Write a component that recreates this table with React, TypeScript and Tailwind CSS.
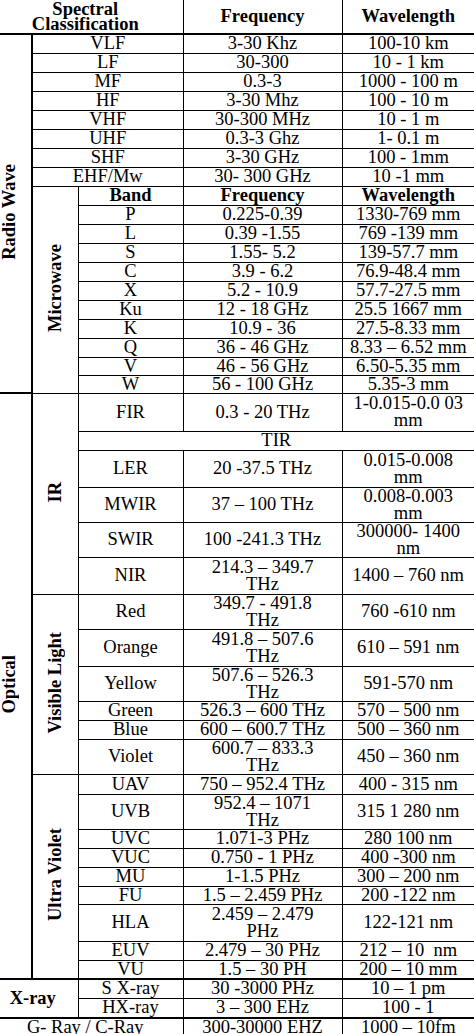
const radio = [
  ['VLF', '3-30 Khz', '100-10 km'],
  ['LF', '30-300', '10 - 1 km'],
  ['MF', '0.3-3', '1000 - 100 m'],
  ['HF', '3-30 Mhz', '100 - 10 m'],
  ['VHF', '30-300 MHz', '10 - 1 m'],
  ['UHF', '0.3-3 Ghz', '1- 0.1 m'],
  ['SHF', '3-30 GHz', '100 - 1mm'],
  ['EHF/Mw', '30- 300 GHz', '10 -1 mm'],
]

const micro = [
  { band: 'P', freq: '0.225-0.39', wave: '1330-769 mm', h: 'h-[19px]' },
  { band: 'L', freq: '0.39 -1.55', wave: '769 -139 mm', h: 'h-[19px]' },
  { band: 'S', freq: '1.55- 5.2', wave: '139-57.7 mm', h: 'h-[19px]' },
  { band: 'C', freq: '3.9 - 6.2', wave: '76.9-48.4 mm', h: 'h-[19px]' },
  { band: 'X', freq: '5.2 - 10.9', wave: '57.7-27.5 mm', h: 'h-[19px]' },
  { band: 'Ku', freq: '12 - 18 GHz', wave: '25.5 1667 mm', h: 'h-[19px]' },
  { band: 'K', freq: '10.9 - 36', wave: '27.5-8.33 mm', h: 'h-[19px]' },
  { band: 'Q', freq: '36 - 46 GHz', wave: '8.33 – 6.52 mm', h: 'h-[19px]' },
  { band: 'V', freq: '46 - 56 GHz', wave: '6.50-5.35 mm', h: 'h-[18px]' },
  { band: 'W', freq: '56 - 100 GHz', wave: '5.35-3 mm', h: 'h-[18px]' },
]

type Row = { band: string; freq: string[]; wave: string[]; h: string }

const ir: Row[] = [
  { band: 'FIR', freq: ['0.3 - 20 THz'], wave: ['1-0.015-0.0 03', 'mm'], h: 'h-[38px]' },
  { band: 'LER', freq: ['20 -37.5 THz'], wave: ['0.015-0.008', 'mm'], h: 'h-[37px]' },
  { band: 'MWIR', freq: ['37 – 100 THz'], wave: ['0.008-0.003', 'mm'], h: 'h-[35px]' },
  { band: 'SWIR', freq: ['100 -241.3 THz'], wave: ['300000- 1400', 'nm'], h: 'h-[35px]' },
  { band: 'NIR', freq: ['214.3 – 349.7', 'THz'], wave: ['1400 – 760 nm'], h: 'h-[37px]' },
]

const visible: Row[] = [
  { band: 'Red', freq: ['349.7 - 491.8', 'THz'], wave: ['760 -610 nm'], h: 'h-[34px]' },
  { band: 'Orange', freq: ['491.8 – 507.6', 'THz'], wave: ['610 – 591 nm'], h: 'h-[37px]' },
  { band: 'Yellow', freq: ['507.6 – 526.3', 'THz'], wave: ['591-570 nm'], h: 'h-[35px]' },
  { band: 'Green', freq: ['526.3 – 600 THz'], wave: ['570 – 500 nm'], h: 'h-[19px]' },
  { band: 'Blue', freq: ['600 – 600.7 THz'], wave: ['500 – 360 nm'], h: 'h-[19px]' },
  { band: 'Violet', freq: ['600.7 – 833.3', 'THz'], wave: ['450 – 360 nm'], h: 'h-[35px]' },
]

const uv: Row[] = [
  { band: 'UAV', freq: ['750 – 952.4 THz'], wave: ['400 - 315 nm'], h: 'h-[20px]' },
  { band: 'UVB', freq: ['952.4 – 1071', 'THz'], wave: ['315 1 280 nm'], h: 'h-[35px]' },
  { band: 'UVC', freq: ['1.071-3 PHz'], wave: ['280 100 nm'], h: 'h-[19px]' },
  { band: 'VUC', freq: ['0.750 - 1 PHz'], wave: ['400 -300 nm'], h: 'h-[19px]' },
  { band: 'MU', freq: ['1-1.5 PHz'], wave: ['300 – 200 nm'], h: 'h-[19px]' },
  { band: 'FU', freq: ['1.5 – 2.459 PHz'], wave: ['200 -122 nm'], h: 'h-[18px]' },
  { band: 'HLA', freq: ['2.459 – 2.479', 'PHz'], wave: ['122-121 nm'], h: 'h-[37px]' },
  { band: 'EUV', freq: ['2.479 – 30 PHz'], wave: ['212 – 10  nm'], h: 'h-[19px]' },
  { band: 'VU', freq: ['1.5 – 30 PH'], wave: ['200 – 10 mm'], h: 'h-[18px]' },
]

const td = 'border border-black p-0 text-center align-middle whitespace-nowrap'

function Lines({ items }: { items: string[] }) {
  return (
    <>
      {items.map((t, i) => (
        <div key={i} className="whitespace-pre">{t}</div>
      ))}
    </>
  )
}

function Vertical({ children }: { children: string }) {
  return <span className="inline-block font-bold [writing-mode:vertical-rl] rotate-180">{children}</span>
}

export default function App() {
  const bandRows = (rows: Row[], label: string) =>
    rows.map((r, i) => (
      <tr key={label + r.band} className={r.h}>
        {i === 0 && (
          <td rowSpan={rows.length} className={td}>
            <Vertical>{label}</Vertical>
          </td>
        )}
        <td className={td}>{r.band}</td>
        <td className={td}><Lines items={r.freq} /></td>
        <td className={td}><Lines items={r.wave} /></td>
      </tr>
    ))

  const [fir, ...restIr] = ir

  return (
    <div className="w-[474px] h-[1034px] overflow-hidden bg-white">
      {/* the source table is cropped on its left, so the first column starts off-screen */}
      <table className="-ml-3 w-[486px] table-fixed border-collapse border-hidden font-['Liberation_Serif',serif] text-[18.5px] leading-[17px] text-black">
        <colgroup>
          <col className="w-[44px]" />
          <col className="w-[46px]" />
          <col className="w-[105px]" />
          <col className="w-[159px]" />
          <col className="w-[132px]" />
        </colgroup>
        <tbody>
          <tr className="h-[34px]">
            <td colSpan={3} className={`${td} border-b-2 font-bold leading-[15px]`}>
              <div>Spectral</div>
              <div>Classification</div>
            </td>
            <td className={`${td} border-b-2 font-bold`}>Frequency</td>
            <td className={`${td} border-b-2 font-bold`}>Wavelength</td>
          </tr>

          {radio.map((r, i) => (
            <tr key={r[0]} className="h-[19px]">
              {i === 0 && (
                <td rowSpan={19} className={`${td} border-r-2 border-b-2`}>
                  <Vertical>Radio Wave</Vertical>
                </td>
              )}
              <td colSpan={2} className={td}>{r[0]}</td>
              <td className={td}>{r[1]}</td>
              <td className={td}>{r[2]}</td>
            </tr>
          ))}

          <tr className="h-[19px]">
            <td rowSpan={11} className={td}>
              <Vertical>Microwave</Vertical>
            </td>
            <td className={`${td} font-bold`}>Band</td>
            <td className={`${td} font-bold`}>Frequency</td>
            <td className={`${td} font-bold`}>Wavelength</td>
          </tr>
          {micro.map(r => (
            <tr key={r.band} className={r.h}>
              <td className={td}>{r.band}</td>
              <td className={td}>{r.freq}</td>
              <td className={td}>{r.wave}</td>
            </tr>
          ))}

          <tr className={fir.h}>
            <td rowSpan={21} className={`${td} border-r-2 border-b-2`}>
              <Vertical>Optical</Vertical>
            </td>
            <td rowSpan={6} className={td}>
              <Vertical>IR</Vertical>
            </td>
            <td className={td}>{fir.band}</td>
            <td className={td}><Lines items={fir.freq} /></td>
            <td className={td}><Lines items={fir.wave} /></td>
          </tr>
          <tr className="h-[19px]">
            <td colSpan={3} className={td}>TIR</td>
          </tr>
          {restIr.map(r => (
            <tr key={r.band} className={r.h}>
              <td className={td}>{r.band}</td>
              <td className={td}><Lines items={r.freq} /></td>
              <td className={td}><Lines items={r.wave} /></td>
            </tr>
          ))}

          {bandRows(visible, 'Visible Light')}
          {bandRows(uv, 'Ultra Violet')}

          <tr className="h-[20px]">
            <td rowSpan={2} colSpan={2} className={`${td} border-t-2 font-bold`}>X-ray</td>
            <td className={`${td} border-t-2`}>S X-ray</td>
            <td className={`${td} border-t-2`}>30 -3000 PHz</td>
            <td className={`${td} border-t-2`}>10 – 1 pm</td>
          </tr>
          <tr className="h-[19px]">
            <td className={td}>HX-ray</td>
            <td className={td}>3 – 300 EHz</td>
            <td className={td}>100 - 1</td>
          </tr>
          <tr className="h-[18px]">
            <td colSpan={3} className={`${td} border-t-2`}>G- Ray / C-Ray</td>
            <td className={`${td} border-t-2`}>300-30000 EHZ</td>
            <td className={`${td} border-t-2`}>1000 – 10fm</td>
          </tr>
        </tbody>
      </table>
    </div>
  )
}
